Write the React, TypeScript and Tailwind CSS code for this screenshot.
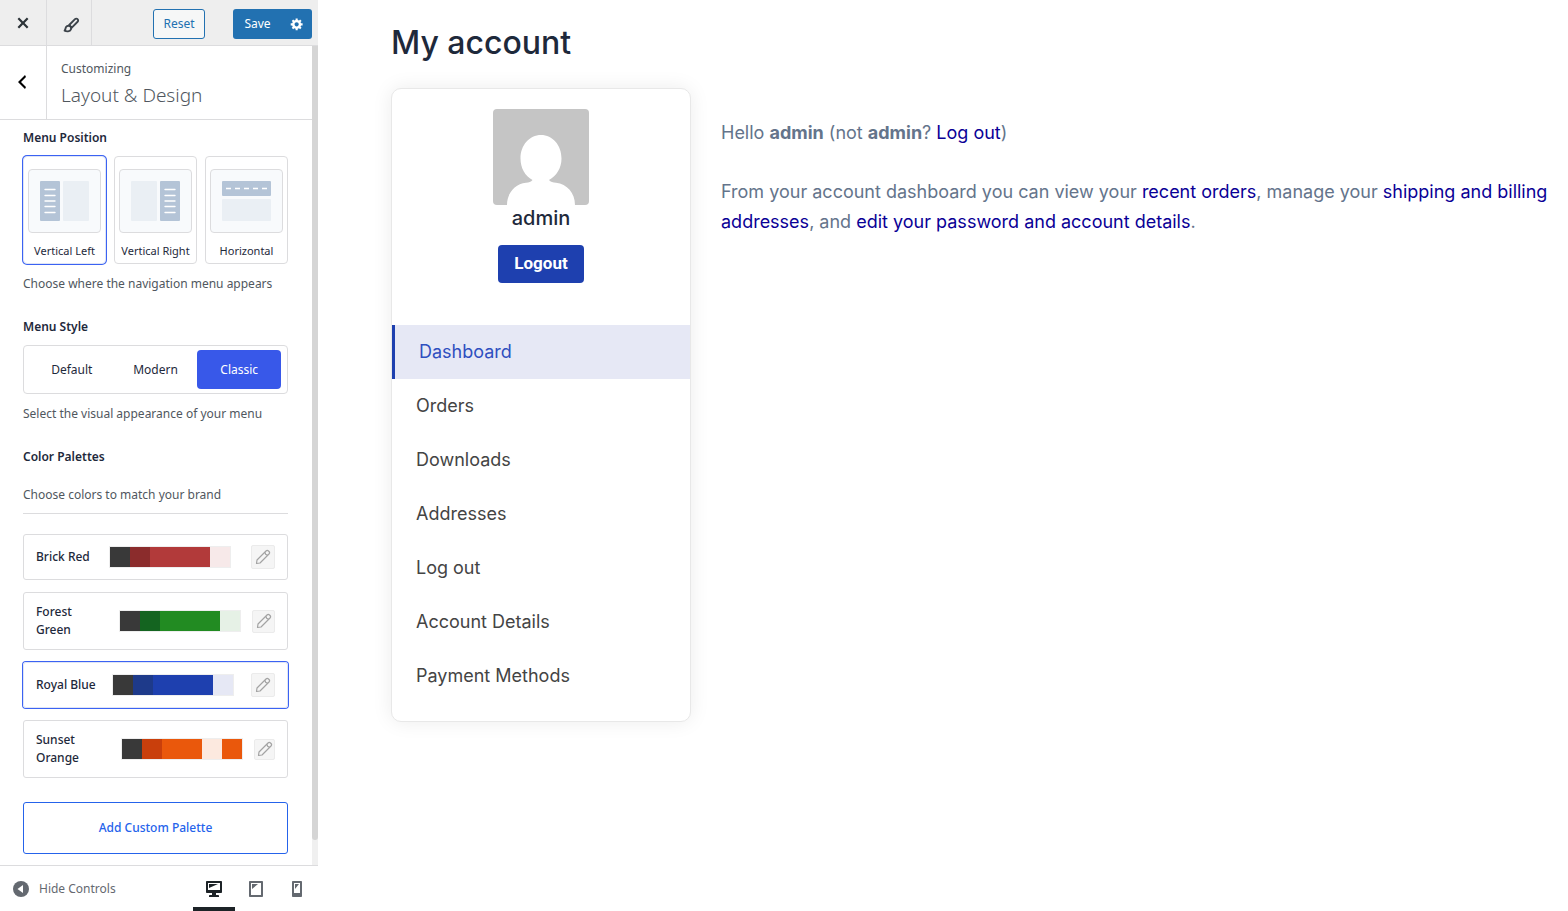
import React from "react";

type Palette = {
  name: string;
  colors: string[];
  nameWidth: string;
  button: string;
  selected?: boolean;
};

const PALETTES: Palette[] = [
  { name: "Brick Red", nameWidth: "whitespace-nowrap", button: "size-6", colors: ["bg-[#393939]", "bg-[#8b2c2c]", "bg-[#b23a3a]", "bg-[#b23a3a]", "bg-[#b23a3a]", "bg-[#f7e9e9]"] },
  { name: "Forest Green", nameWidth: "w-[72px]", button: "size-[23px]", colors: ["bg-[#393939]", "bg-[#146420]", "bg-[#228b22]", "bg-[#228b22]", "bg-[#228b22]", "bg-[#e6f1e6]"] },
  { name: "Royal Blue", nameWidth: "whitespace-nowrap", button: "size-6", selected: true, colors: ["bg-[#393939]", "bg-[#1e3a8a]", "bg-[#1e40af]", "bg-[#1e40af]", "bg-[#1e40af]", "bg-[#e6e8f5]"] },
  { name: "Sunset Orange", nameWidth: "w-[74px]", button: "size-[21px]", colors: ["bg-[#393939]", "bg-[#c93f0c]", "bg-[#ea580c]", "bg-[#ea580c]", "bg-[#fce9df]", "bg-[#ea580c]"] },
];

const MENU = ["Dashboard", "Orders", "Downloads", "Addresses", "Log out", "Account Details", "Payment Methods"];

function Dashicon({ d, className }: { d: string; className: string }) {
  return (
    <svg viewBox="0 0 20 20" className={className} fill="currentColor" aria-hidden="true">
      <path d={d} />
    </svg>
  );
}

const ICONS = {
  close: "M14.95 6.46L11.41 10l3.54 3.54-1.41 1.41L10 11.42l-3.53 3.53-1.42-1.42L8.58 10 5.05 6.47l1.42-1.42L10 8.58l3.54-3.53z",
  back: "M14 5l-5 5 5 5-1 2-7-7 7-7z",
  gear: "M18 12h-2.18c-.17.7-.44 1.35-.81 1.93l1.54 1.54-2.1 2.1-1.54-1.54c-.58.36-1.23.63-1.91.79V19H8v-2.18c-.68-.16-1.33-.43-1.91-.79l-1.54 1.54-2.12-2.12 1.54-1.54c-.36-.58-.63-1.23-.79-1.91H1V9.03h2.17c.16-.7.44-1.35.8-1.94L2.43 5.55l2.1-2.1 1.54 1.54c.58-.37 1.24-.64 1.93-.81V2h3v2.18c.68.16 1.33.43 1.91.79l1.54-1.54 2.12 2.12-1.54 1.54c.36.59.64 1.24.8 1.94H18V12zm-8.5 1.5c1.66 0 3-1.34 3-3s-1.34-3-3-3-3 1.34-3 3 1.34 3 3 3z",
  desktop: "M3 2h14c.55 0 1 .45 1 1v10c0 .55-.45 1-1 1h-5v2h2c.55 0 1 .45 1 1v1H5v-1c0-.55.45-1 1-1h2v-2H3c-.55 0-1-.45-1-1V3c0-.55.45-1 1-1zm13 9V4H4v7h12zM5 5h9L5 9V5z",
  tablet: "M4 2h12c.55 0 1 .45 1 1v14c0 .55-.45 1-1 1H4c-.55 0-1-.45-1-1V3c0-.55.45-1 1-1zm11 14V4H5v12h10zM6 5h6l-6 5V5z",
  phone: "M6 2h8c.55 0 1 .45 1 1v14c0 .55-.45 1-1 1H6c-.55 0-1-.45-1-1V3c0-.55.45-1 1-1zm7 12V4H7v10h6zM8 5h4l-4 5V5z",
};

function BrushIcon() {
  return (
    <svg viewBox="0 0 20 20" className="size-5" fill="none" stroke="currentColor" strokeWidth="1.900" strokeLinejoin="round" aria-hidden="true">
      <path d="M8.200 10 14 4.200a1.800 1.800 0 0 1 2.600 0 1.800 1.800 0 0 1 0 2.600L10.800 12.600z" />
      <path d="M8.800 11c-2-.8-4 .2-4.200 2.200-.1.900-.4 1.800-1 2.500 1.800 1 5.400 1.200 6.300-1.200.4-1.100.2-2.700-1.100-3.500z" />
    </svg>
  );
}

function PencilIcon() {
  return (
    <svg viewBox="0 0 16 16" className="size-4" fill="none" stroke="currentColor" strokeWidth="1.200" strokeLinejoin="round" aria-hidden="true">
      <path d="M1.500 14.500 2 11 11 2a1.800 1.800 0 0 1 2.500 0l.5.5a1.800 1.800 0 0 1 0 2.500L5 14z" />
      <path d="M10 3.200c0 1.800 1 2.800 2.800 2.800" />
    </svg>
  );
}

function LayoutPreview({ kind }: { kind: "left" | "right" | "top" }) {
  if (kind === "top") {
    return (
      <svg viewBox="0 0 50 42" className="h-[42px] w-[50px]" aria-hidden="true">
        <rect y="1" width="49" height="15" rx="1" fill="#b4c4d7" />
        <path d="M4 8.500h41" stroke="#fff" strokeWidth="1.500" strokeDasharray="5 4" />
        <rect y="19" width="49" height="22" rx="1" fill="#eaeff4" />
      </svg>
    );
  }
  const menuX = kind === "left" ? 0 : 29;
  const bodyX = kind === "left" ? 23 : 0;
  return (
    <svg viewBox="0 0 50 42" className="h-[42px] w-[50px]" aria-hidden="true">
      <rect x={bodyX} y="1" width="26" height="40" rx="1" fill="#eaeff4" />
      <rect x={menuX} y="1" width="20" height="40" rx="1" fill="#b4c4d7" />
      {[9.5, 15.5, 21, 26.5, 32.5].map((y) => (
        <path key={y} d={`M${menuX + 5} ${y}h10`} stroke="#fff" strokeWidth="1.400" strokeLinecap="round" />
      ))}
    </svg>
  );
}

function PositionOption({ label, kind, selected }: { label: string; kind: "left" | "right" | "top"; selected?: boolean }) {
  return (
    <button
      type="button"
      aria-pressed={!!selected}
      className={`flex min-w-0 flex-1 flex-col items-center rounded border bg-white px-1 pt-3 ${selected ? "border-[#dfe5f5] ring-1 ring-[#3b63f3]" : "border-[#dcdcde]"}`}
    >
      <span className="flex h-16 w-full items-center justify-center rounded border border-[#dcdcde] bg-[#f8fafc]">
        <LayoutPreview kind={kind} />
      </span>
      <span className="mt-2 mb-[2px] text-[11px] leading-5 whitespace-nowrap text-[#1e293b]">{label}</span>
    </button>
  );
}

function Sidebar() {
  return (
    <aside className="flex h-screen w-[318px] shrink-0 flex-col bg-white font-['Noto_Sans','Open_Sans',sans-serif] text-xs text-[#50575e]">
      <header className="flex h-[46px] shrink-0 items-stretch border-b border-[#dcdcde] bg-[#eee]">
        <button type="button" aria-label="Close" className="flex w-[47px] items-center justify-center border-r border-[#dcdcde] text-[#2c3338]">
          <Dashicon d={ICONS.close} className="size-[22px]" />
        </button>
        <button type="button" aria-label="Styles" className="flex w-[45px] items-center justify-center border-r border-[#dcdcde] pt-1 pl-1 text-[#3c434a]">
          <BrushIcon />
        </button>
        <div className="flex flex-1 items-center justify-end pt-[3px] pr-[6px]">
          <button type="button" className="h-[30px] w-[52px] rounded-[3px] border border-[#2271b1] bg-[#f6f7f7] text-[#2271b1]">Reset</button>
          <div className="ml-7 flex h-[30px] overflow-hidden rounded-[3px] bg-[#2271b1] text-white">
            <button type="button" className="w-[49px]">Save</button>
            <button type="button" aria-label="Publish settings" className="flex w-[30px] items-center justify-center">
              <Dashicon d={ICONS.gear} className="size-[14px]" />
            </button>
          </div>
        </div>
      </header>

      <div className="flex min-h-0 flex-1">
        <div className="min-w-0 flex-1 overflow-hidden">
          <div className="flex h-[74px] border-b border-[#dcdcde]">
            <button type="button" aria-label="Back" className="flex w-[47px] items-center justify-center border-r border-[#dcdcde] pr-[2px] pb-[2px] text-black">
              <Dashicon d={ICONS.back} className="size-5" />
            </button>
            <div className="pt-[13px] pl-[14px]">
              <p className="leading-5">Customizing</p>
              <h2 className="mt-[3px] text-[19px] leading-[26px] font-light">Layout &amp; Design</h2>
            </div>
          </div>

          <div className="px-6 pt-2 pl-[23px]">
            <section>
              <h3 className="leading-5 font-semibold text-[#1e293b]">Menu Position</h3>
              <div className="mt-2 flex gap-2">
                <PositionOption label="Vertical Left" kind="left" selected />
                <PositionOption label="Vertical Right" kind="right" />
                <PositionOption label="Horizontal" kind="top" />
              </div>
              <p className="mt-[10px] leading-5">Choose where the navigation menu appears</p>
            </section>

            <section className="mt-[23px]">
              <h3 className="leading-5 font-semibold text-[#1e293b]">Menu Style</h3>
              <div className="mt-2 flex h-[49px] rounded border border-[#dcdcde] px-[6px] py-1 text-[#1e293b]">
                <button type="button" className="flex-1">Default</button>
                <button type="button" className="flex-1">Modern</button>
                <button type="button" className="flex-1 rounded-sm bg-[#3858e9] text-white">Classic</button>
              </div>
              <p className="mt-[10px] leading-5">Select the visual appearance of your menu</p>
            </section>

            <section className="mt-[23px]">
              <h3 className="leading-5 font-semibold text-[#1e293b]">Color Palettes</h3>
              <p className="mt-[18px] border-b border-[#dcdcde] pb-2 leading-5">Choose colors to match your brand</p>
              <div className="mt-5 flex flex-col gap-3">
                {PALETTES.map((p) => (
                  <div
                    key={p.name}
                    className={`flex min-h-[46px] items-center justify-between rounded-[3px] border px-3 py-[10px] ${p.selected ? "border-[#dfe5f5] ring-1 ring-[#3b63f3]" : "border-[#dcdcde]"}`}
                  >
                    <span className={`leading-[18px] font-medium text-[#1e293b] ${p.nameWidth}`}>{p.name}</span>
                    <span className="flex shrink-0 border border-[#eee]">
                      {p.colors.map((c, i) => (
                        <span key={i} className={`size-5 ${c}`} />
                      ))}
                    </span>
                    <button
                      type="button"
                      aria-label={`Edit ${p.name}`}
                      className={`flex shrink-0 items-center justify-center rounded-xs border border-[#ebebeb] bg-[#f5f5f5] text-[#a3a3a3] ${p.button}`}
                    >
                      <PencilIcon />
                    </button>
                  </div>
                ))}
              </div>
              <button type="button" className="mt-6 h-[52px] w-full rounded-[3px] border border-[#2563eb] font-medium text-[#2563eb]">
                Add Custom Palette
              </button>
            </section>
          </div>
        </div>
        <div className="w-[6px] shrink-0 bg-[#f0f0f0] pb-[25px]">
          <div className="h-full rounded-b-full bg-[#d5d5d5]" />
        </div>
      </div>

      <footer className="flex h-[46px] shrink-0 items-stretch justify-between border-t border-[#dcdcde]">
        <button type="button" className="flex items-center gap-[10px] pl-[13px] text-[#646970]">
          <svg viewBox="0 0 16 16" className="size-4" aria-hidden="true">
            <circle cx="8" cy="8" r="8" fill="#646970" />
            <path d="M10 4v8L4.500 8z" fill="#fff" />
          </svg>
          Hide Controls
        </button>
        <div className="flex text-[#646970]">
          <button type="button" aria-label="Desktop preview" className="flex w-[42px] items-center justify-center border-b-4 border-[#1d2327] pt-1 text-[#1d2327]">
            <Dashicon d={ICONS.desktop} className="size-5" />
          </button>
          <button type="button" aria-label="Tablet preview" className="flex w-[41px] items-center justify-center">
            <Dashicon d={ICONS.tablet} className="size-5" />
          </button>
          <button type="button" aria-label="Mobile preview" className="flex w-[42px] items-center justify-center">
            <Dashicon d={ICONS.phone} className="size-5" />
          </button>
        </div>
      </footer>
    </aside>
  );
}

function AccountCard() {
  return (
    <div className="w-[300px] shrink-0 self-start rounded-[10px] border border-[#e8e8e8] bg-white pb-[18px] shadow-[0_0_20px_rgba(0,0,0,0.08)]">
      <div className="flex flex-col items-center pt-5">
        <svg viewBox="0 0 96 96" className="size-24 rounded" role="img" aria-label="Avatar">
          <rect width="96" height="96" fill="#c5c5c5" />
          <path d="M48 26c11.500 0 20.500 10 20.500 23.500 0 9.500-5 17.500-12.500 21.500 1.500 2 4 2.500 7 2.800C74 75 82 84 82 96H14c0-12 8-21 19-22.200 3-.3 5-.8 6.500-2.800-7.500-4-12-12-12-21.500C27.500 36 36.500 26 48 26z" fill="#fff" />
        </svg>
        <p className="text-xl leading-[26px] font-medium text-[#1e293b]">admin</p>
        <button type="button" className="mt-[14px] h-[38px] rounded bg-[#1e40af] px-4 font-[Roboto,sans-serif] text-[17px] font-bold text-white">Logout</button>
      </div>
      <nav className="mt-[42px] flex flex-col text-lg text-[#444]">
        {MENU.map((item, i) => (
          <a
            key={item}
            href="#"
            className={`flex h-[54px] items-center ${i === 0 ? "border-l-3 border-[#1e40af] bg-[#e6e8f5] pl-6 text-[#2f4fc0]" : "pl-6"}`}
          >
            {item}
          </a>
        ))}
      </nav>
    </div>
  );
}

export default function App() {
  return (
    <div className="flex min-h-screen bg-white">
      <Sidebar />
      <main className="min-w-0 flex-1 pt-5 pr-5 pl-[73px] font-[Inter,sans-serif]">
        <h1 className="text-[32px] leading-[46px] font-medium text-[#1e293b]">My account</h1>
        <div className="mt-[22px] flex gap-[30px]">
          <AccountCard />
          <div className="min-w-0 flex-1 pt-[30px] text-lg leading-[30px] text-[#64748b] [&_a]:text-[#0a0096]">
            <p>
              Hello <strong>admin</strong> (not <strong>admin</strong>? <a href="#">Log out</a>)
            </p>
            <p className="mt-[29px]">
              From your account dashboard you can view your <a href="#">recent orders</a>, manage your <a href="#">shipping and billing addresses</a>, and <a href="#">edit your password and account details</a>.
            </p>
          </div>
        </div>
      </main>
    </div>
  );
}
